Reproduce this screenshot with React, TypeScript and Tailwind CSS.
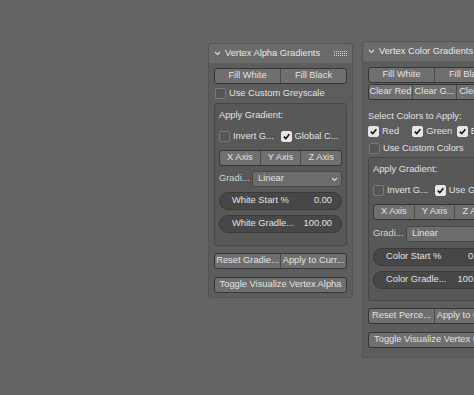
import React from 'react';

const Check: React.FC<{ checked?: boolean }> = ({ checked }) => (
  <span
    className={`w-[11px] h-[11px] rounded-[2px] flex items-center justify-center shrink-0 border ${
      checked ? 'bg-[#e6e6e6] border-[#e6e6e6]' : 'bg-[#565656] border-[#7a7a7a]'
    }`}
  >
    {checked && (
      <svg width="9" height="9" viewBox="0 0 10 10">
        <path d="M2 5.2 L4.2 7.4 L8.2 2.6" fill="none" stroke="#111" strokeWidth="1.8" />
      </svg>
    )}
  </span>
);

const CheckRow: React.FC<{ label: string; checked?: boolean; className?: string }> = ({ label, checked, className = '' }) => (
  <div className={`flex items-center gap-[3px] h-[13px] min-w-0 ${className}`}>
    <Check checked={checked} />
    <span className="whitespace-nowrap">{label}</span>
  </div>
);

const BtnRow: React.FC<{ labels: string[] }> = ({ labels }) => (
  <div className="flex h-[16px] rounded-[3px] border border-[#363636] overflow-hidden bg-[#6f6f6f]">
    {labels.map((l, i) => (
      <div
        key={i}
        className={`flex-1 min-w-0 flex items-center justify-center whitespace-nowrap overflow-hidden px-[1px] ${
          i > 0 ? 'border-l border-[#4a4a4a]' : ''
        }`}
      >
        {l}
      </div>
    ))}
  </div>
);

const Slider: React.FC<{ label: string; value: string }> = ({ label, value }) => (
  <div className="flex items-center h-[18px] rounded-full bg-[#474747] border border-[#3a3a3a] pl-[12px] pr-[9px]">
    <span className="whitespace-nowrap">{label}</span>
    <span className="ml-auto whitespace-nowrap">{value}</span>
  </div>
);

const Dropdown: React.FC = () => (
  <div className="flex items-center gap-[3px] h-[16px]">
    <span className="w-[30px] text-[#d4d4d4] whitespace-nowrap">Gradi...</span>
    <div className="flex-1 flex items-center h-full rounded-[3px] bg-[#6c6c6c] border border-[#474747] pl-[5px] pr-[3px]">
      <span>Linear</span>
      <svg className="ml-auto" width="7" height="5" viewBox="0 0 7 5">
        <path d="M1 1 L3.5 3.5 L6 1" fill="none" stroke="#dcdcdc" strokeWidth="1.1" />
      </svg>
    </div>
  </div>
);

const Header: React.FC<{ title: string }> = ({ title }) => (
  <div className="flex items-center h-[19px] bg-[#6b6b6b] px-[5px] gap-[4px] rounded-t-[3px]">
    <svg width="7" height="5" viewBox="0 0 7 5">
      <path d="M1 1 L3.5 3.5 L6 1" fill="none" stroke="#dcdcdc" strokeWidth="1.1" />
    </svg>
    <span className="whitespace-nowrap text-[#e8e8e8]">{title}</span>
    <svg className="ml-auto" width="13" height="5" viewBox="0 0 13 5">
      {[0, 1, 2, 3, 4, 5, 6].map(i =>
        [0, 1, 2].map(j => <rect key={`${i}-${j}`} x={i * 2} y={j * 2} width="1" height="1" fill="#d6d6d6" />)
      )}
    </svg>
  </div>
);

const Sub: React.FC<{ children: React.ReactNode; className?: string }> = ({ children, className = '' }) => (
  <div className={`rounded-[3px] border border-[#474747] bg-[#585858] px-[4px] pt-[5px] flex flex-col ${className}`}>
    {children}
  </div>
);

const AlphaPanel: React.FC = () => (
  <div className="w-[145px] mt-[2px] shrink-0 rounded-[3px] bg-[#5d5d5d] border border-[#545454] flex flex-col pb-[4px]">
    <Header title="Vertex Alpha Gradients" />
    <div className="flex flex-col px-[5px] pt-[5px]">
      <BtnRow labels={['Fill White', 'Fill Black']} />
      <CheckRow label="Use Custom Greyscale" className="mt-[3px] ml-[1px]" />
      <Sub className="mt-[3px] pb-[12px]">
        <span className="h-[12px] leading-[12px]">Apply Gradient:</span>
        <div className="grid grid-cols-2 mt-[9px]">
          <CheckRow label="Invert G..." />
          <CheckRow label="Global C..." checked />
        </div>
        <div className="mt-[7px]">
          <BtnRow labels={['X Axis', 'Y Axis', 'Z Axis']} />
        </div>
        <div className="mt-[5px]">
          <Dropdown />
        </div>
        <div className="mt-[5px] flex flex-col gap-[5px]">
          <Slider label="White Start %" value="0.00" />
          <Slider label="White Gradle..." value="100.00" />
        </div>
      </Sub>
      <div className="mt-[7px]">
        <BtnRow labels={['Reset Gradie...', 'Apply to Curr...']} />
      </div>
      <div className="mt-[8px]">
        <BtnRow labels={['Toggle Visualize Vertex Alpha']} />
      </div>
    </div>
  </div>
);

const ColorPanel: React.FC = () => (
  <div className="w-[145px] shrink-0 rounded-[3px] bg-[#5d5d5d] border border-[#545454] flex flex-col pb-[9px]">
    <Header title="Vertex Color Gradients" />
    <div className="flex flex-col px-[5px] pt-[6px]">
      <BtnRow labels={['Fill White', 'Fill Black']} />
      <div className="mt-[1px]">
        <BtnRow labels={['Clear Red', 'Clear G...', 'Clear B...']} />
      </div>
      <span className="mt-[10px] h-[12px] leading-[12px]">Select Colors to Apply:</span>
      <div className="grid grid-cols-3 mt-[3px]">
        <CheckRow label="Red" checked />
        <CheckRow label="Green" checked />
        <CheckRow label="Blue" checked />
      </div>
      <CheckRow label="Use Custom Colors" className="mt-[4px] ml-[1px]" />
      <Sub className="mt-[2px] pb-[11px]">
        <span className="h-[12px] leading-[12px]">Apply Gradient:</span>
        <div className="flex items-center gap-[7px] mt-[9px]">
          <CheckRow label="Invert G..." />
          <CheckRow label="Use G..." checked />
        </div>
        <div className="mt-[7px]">
          <BtnRow labels={['X Axis', 'Y Axis', 'Z Axis']} />
        </div>
        <div className="mt-[6px]">
          <Dropdown />
        </div>
        <div className="mt-[6px] flex flex-col gap-[5px]">
          <Slider label="Color Start %" value="0.00" />
          <Slider label="Color Gradle..." value="100.00" />
        </div>
      </Sub>
      <div className="mt-[7px]">
        <BtnRow labels={['Reset Perce...', 'Apply to Curr...']} />
      </div>
      <div className="mt-[8px]">
        <BtnRow labels={['Toggle Visualize Vertex Color']} />
      </div>
    </div>
  </div>
);

export default function App() {
  return (
    <div
      className="w-[474px] h-[395px] overflow-hidden bg-[#646464] text-[#e2e2e2] text-[9.3px] leading-none flex items-start gap-[9px] pl-[208px] pt-[41px]"
      style={{ fontFamily: '"Liberation Sans", Arial, sans-serif' }}
    >
      <AlphaPanel />
      <ColorPanel />
    </div>
  );
}
